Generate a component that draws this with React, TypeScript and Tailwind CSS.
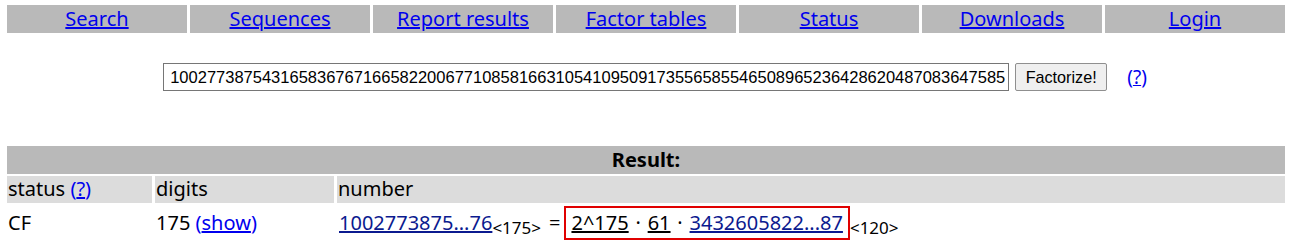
const NAV = ['Search', 'Sequences', 'Report results', 'Factor tables', 'Status', 'Downloads', 'Login']

const NUMBER_TEXT =
  '1002773875431658367671665822006771085816631054109509173556585546508965236428620487083647585'

function HelpLink() {
  return (
    <span className="text-[#0000ee]">
      (<span className="underline">?</span>)
    </span>
  )
}

function Dot() {
  return <span className="w-[19px] text-center">·</span>
}

export default function App() {
  return (
    <div className="min-h-[250px] bg-white pt-[5px] font-['Segoe_UI','Noto_Sans',sans-serif] text-[20px] text-black">
      <nav className="grid grid-cols-7 gap-[3px] px-[7px]">
        {NAV.map((label) => (
          <div key={label} className="flex h-[28px] items-center justify-center bg-[#b9b9b9]">
            <a href="#" className="text-[#0000ee] underline">
              {label}
            </a>
          </div>
        ))}
      </nav>

      <form className="mt-[30px] flex items-center justify-center" onSubmit={(e) => e.preventDefault()}>
        <div className="ml-[18px] flex items-center">
          <input
            type="text"
            defaultValue={NUMBER_TEXT}
            className="h-[28px] w-[846px] border border-[#767676] pl-[6px] pr-[1px] font-['Liberation_Sans',Arial,sans-serif] text-[16.5px] text-black outline-none"
          />
          <button
            type="button"
            className="ml-[6px] h-[28px] w-[92px] rounded-[2px] border border-[#8f8f8f] bg-[#efefef] font-['Liberation_Sans',Arial,sans-serif] text-[16.2px] text-black"
          >
            Factorize!
          </button>
          <span className="ml-[20px] text-[19px]">
            <HelpLink />
          </span>
        </div>
      </form>

      <section className="mt-[54px] px-[7px]">
        <div className="flex h-[28px] items-center justify-center bg-[#b9b9b9] font-bold">Result:</div>
        <div className="mt-[2px] grid grid-cols-[145px_179px_1fr] gap-[3px]">
          <div className="flex h-[27px] items-center bg-[#dcdcdc] pl-[1px]">
            status&nbsp;<HelpLink />
          </div>
          <div className="flex h-[27px] items-center bg-[#dcdcdc] pl-[1px]">digits</div>
          <div className="flex h-[27px] items-center bg-[#dcdcdc] pl-[1px]">number</div>

          <div className="flex h-[34px] items-center pl-[1px]">CF</div>
          <div className="flex h-[34px] items-center pl-[1px]">
            175&nbsp;
            <span className="text-[#0000ee]">
              (<span className="underline">show</span>)
            </span>
          </div>
          <div className="flex h-[34px] items-center whitespace-nowrap pl-[2px]">
            <a href="#" className="text-[#0b1a8f] underline">
              1002773875...76
            </a>
            <span className="relative top-[5px] text-[17px]">&lt;175&gt;</span>
            <span className="ml-[8px]">=</span>
            <span className="ml-[4px] flex h-[34px] items-center border-2 border-[#e00000] px-[5px]">
              <span className="underline">2^175</span>
              <Dot />
              <span className="underline">61</span>
              <Dot />
              <a href="#" className="text-[#0b1a8f] underline">
                3432605822...87
              </a>
            </span>
            <span className="relative top-[5px] text-[17px]">&lt;120&gt;</span>
          </div>
        </div>
      </section>
    </div>
  )
}
